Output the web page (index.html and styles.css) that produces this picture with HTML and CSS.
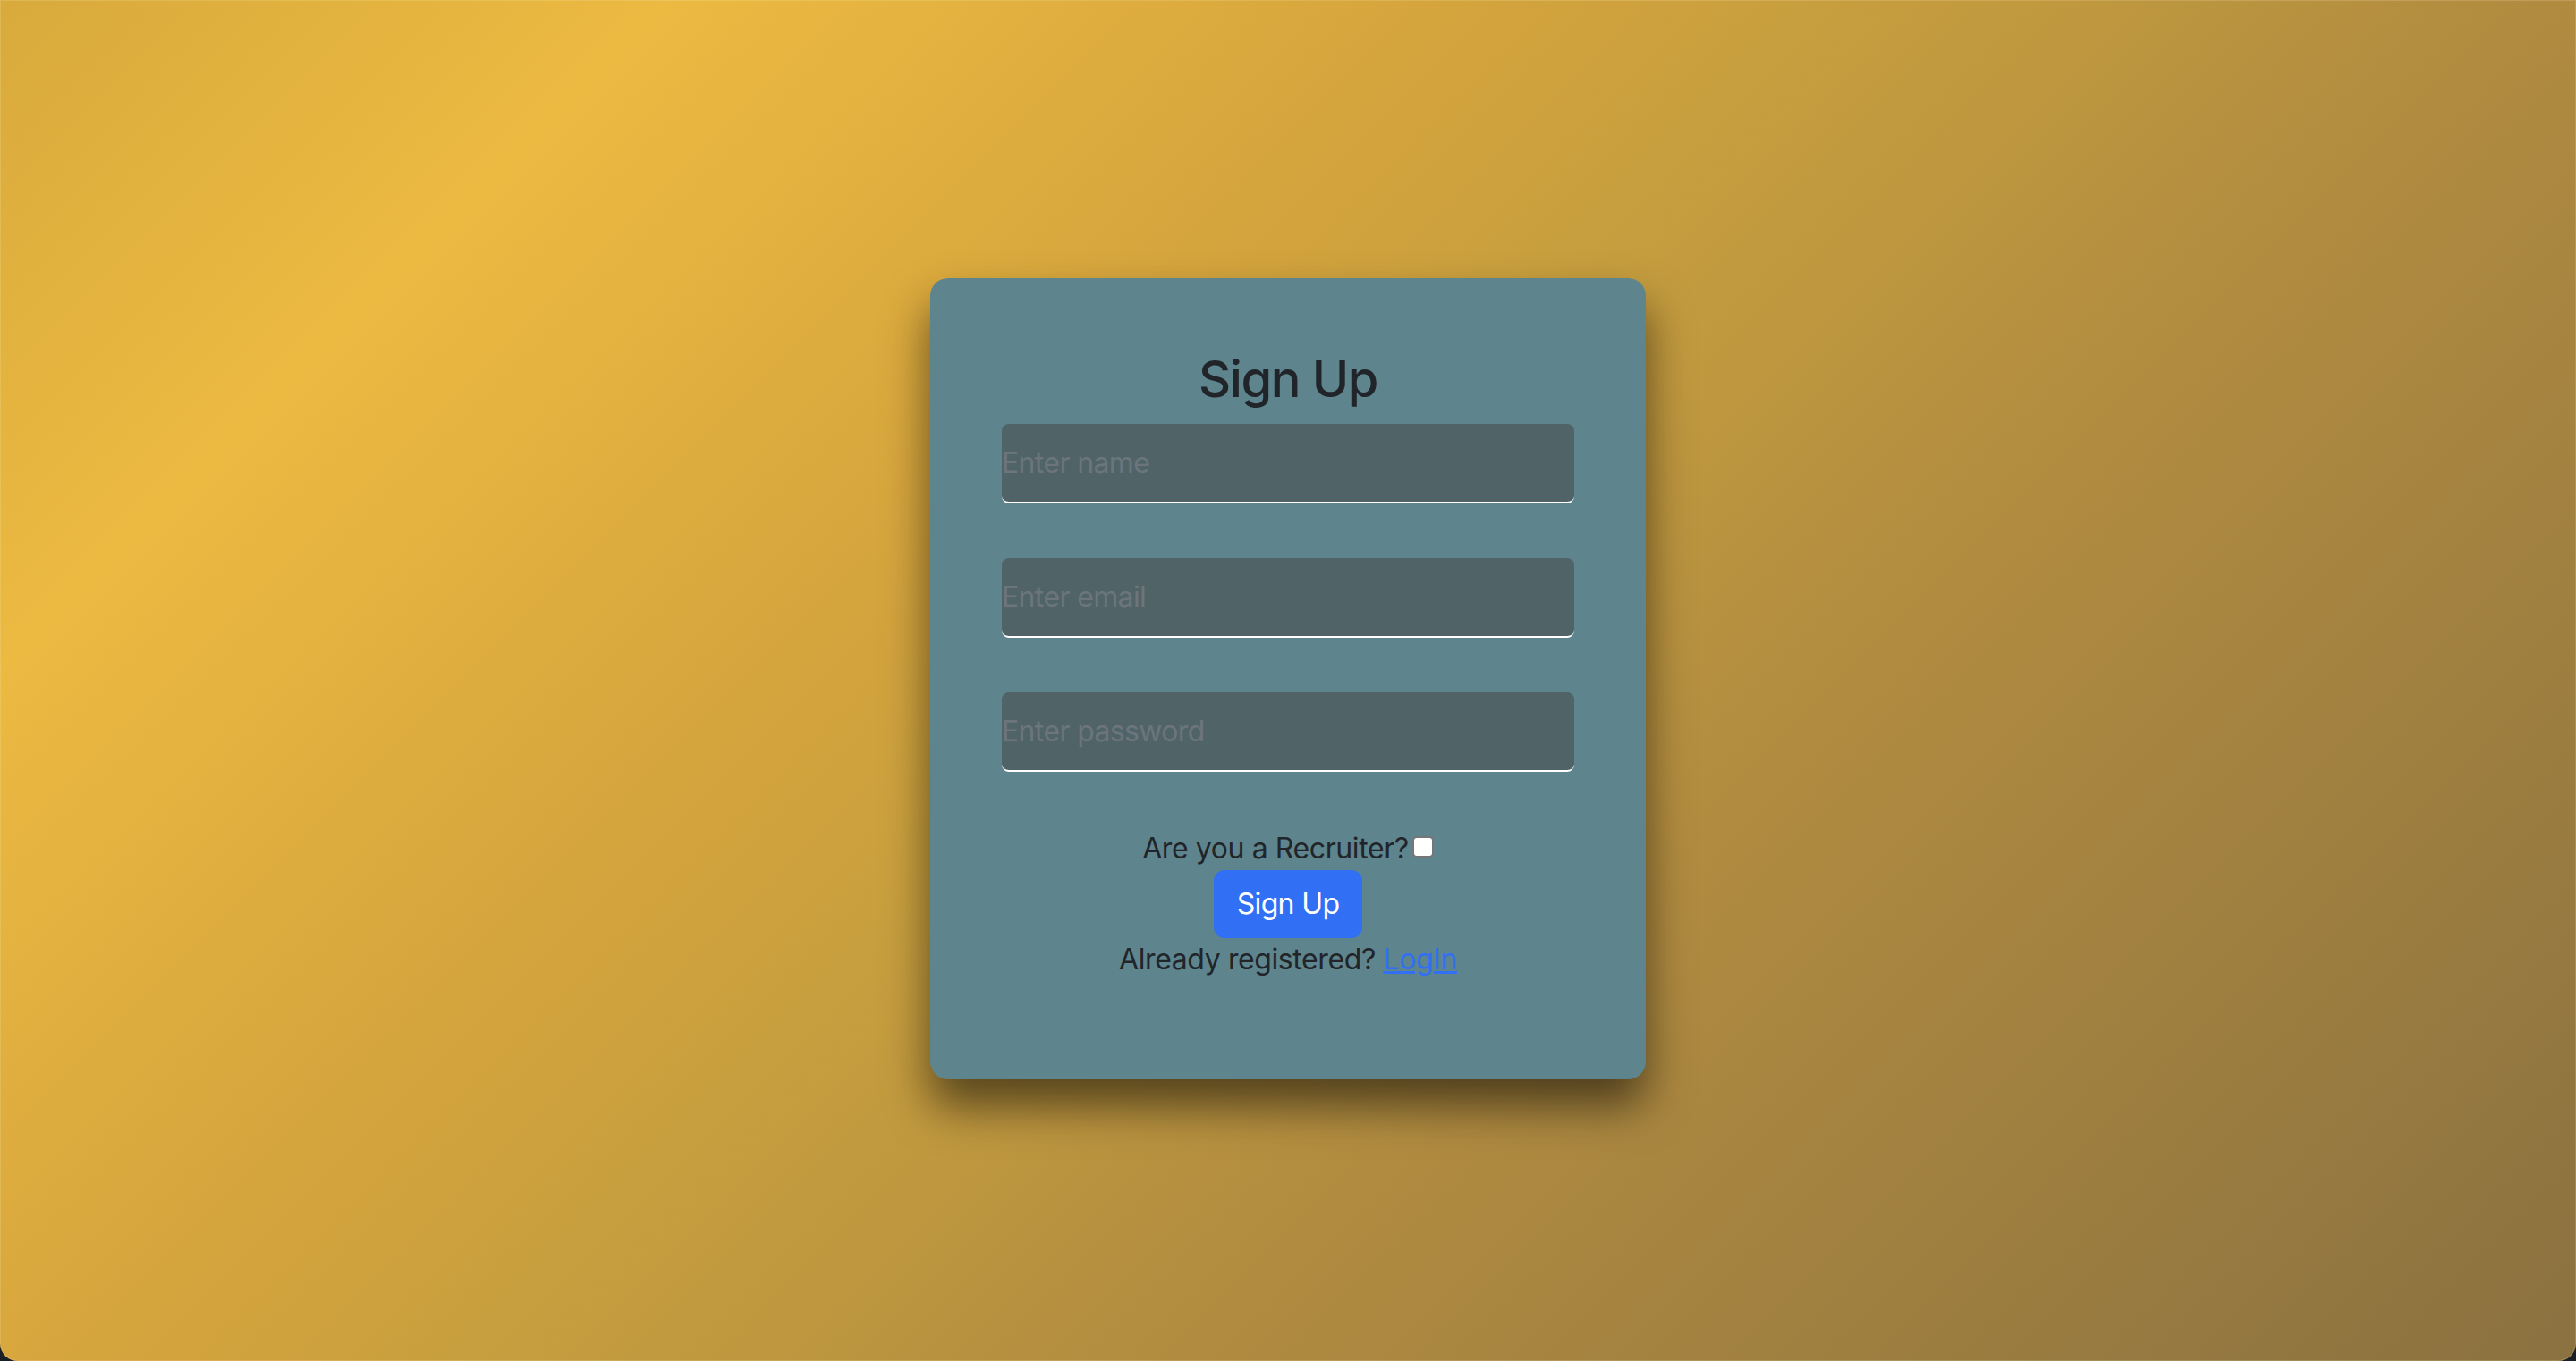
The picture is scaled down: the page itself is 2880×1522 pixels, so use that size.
FILE: index.html
```html
<!DOCTYPE html>
<html lang="en">
<head>
<meta charset="utf-8">
<title>Sign Up</title>
<link rel="stylesheet" href="styles.css">
</head>
<body>
<div class="page">
  <form class="card">
    <h3 class="title">Sign Up</h3>
    <input class="field" type="text" placeholder="Enter name">
    <input class="field" type="email" placeholder="Enter email">
    <input class="field" type="password" placeholder="Enter password">
    <div class="recruiter">Are you a Recruiter?<input class="check" type="checkbox"></div>
    <button class="btn" type="button">Sign Up</button>
    <p class="login">Already registered? <a href="#">LogIn</a></p>
  </form>
</div>
</body>
</html>
```
FILE: styles.css
```css
html, body {
  margin: 0;
  padding: 0;
  background: #1d2126;
}

body {
  font-family: Inter, "Noto Sans", "Liberation Sans", sans-serif;
  color: #212529;
  letter-spacing: -0.025em;
}

.page {
  box-sizing: border-box;
  height: 1522px;
  padding-bottom: 4px;
  display: flex;
  align-items: center;
  justify-content: center;
  border-radius: 0 0 20px 20px;
  background: linear-gradient(135deg, #d8aa3c 0%, #ecba41 17%, #d6a53d 36%, #c89f3e 46%, #b08b40 65%, #8a7140 100%);
  box-shadow: inset 0 0 0 1px rgba(255, 240, 200, 0.18);
}

.card {
  box-sizing: border-box;
  width: 800px;
  padding: 80px 80px 110px;
  background: #5e848d;
  border-radius: 20px;
  box-shadow: 0 30px 50px rgba(0, 0, 0, 0.55);
  display: flex;
  flex-direction: column;
  align-items: stretch;
}

.title {
  margin: 0 0 16px;
  font-size: 56px;
  font-weight: 520;
  line-height: 1.2;
  letter-spacing: -0.025em;
  text-align: center;
  color: #212529;
}

.field {
  box-sizing: border-box;
  display: block;
  width: 100%;
  height: 89px;
  margin: 0 0 61px;
  padding: 0;
  border: none;
  border-bottom: 2px solid #ffffff;
  border-radius: 8px;
  background: #506467;
  font-family: inherit;
  font-size: 32px;
  letter-spacing: -0.02em;
  color: #212529;
  outline: none;
}

.field:last-of-type {
  margin-bottom: 62px;
}

.field::placeholder {
  color: #6c757d;
}

.recruiter {
  font-size: 32px;
  line-height: 48px;
  text-align: center;
}

.check {
  appearance: none;
  -webkit-appearance: none;
  box-sizing: border-box;
  display: inline-block;
  width: 24px;
  height: 24px;
  margin: 0 0 1px 4px;
  vertical-align: baseline;
  background: #ffffff;
  border: 2px solid #767676;
  border-radius: 5px;
}

.btn {
  align-self: center;
  box-sizing: border-box;
  height: 76px;
  padding: 12px 24px;
  border: 2px solid #316ff5;
  border-radius: 12px;
  background: #316ff5;
  color: #ffffff;
  font-family: inherit;
  font-size: 32px;
  line-height: 48px;
  letter-spacing: -0.02em;
  cursor: pointer;
}

.login {
  margin: 0;
  font-size: 32px;
  line-height: 48px;
  text-align: center;
}

.login a {
  color: #316ff5;
  text-decoration: underline;
}
```
